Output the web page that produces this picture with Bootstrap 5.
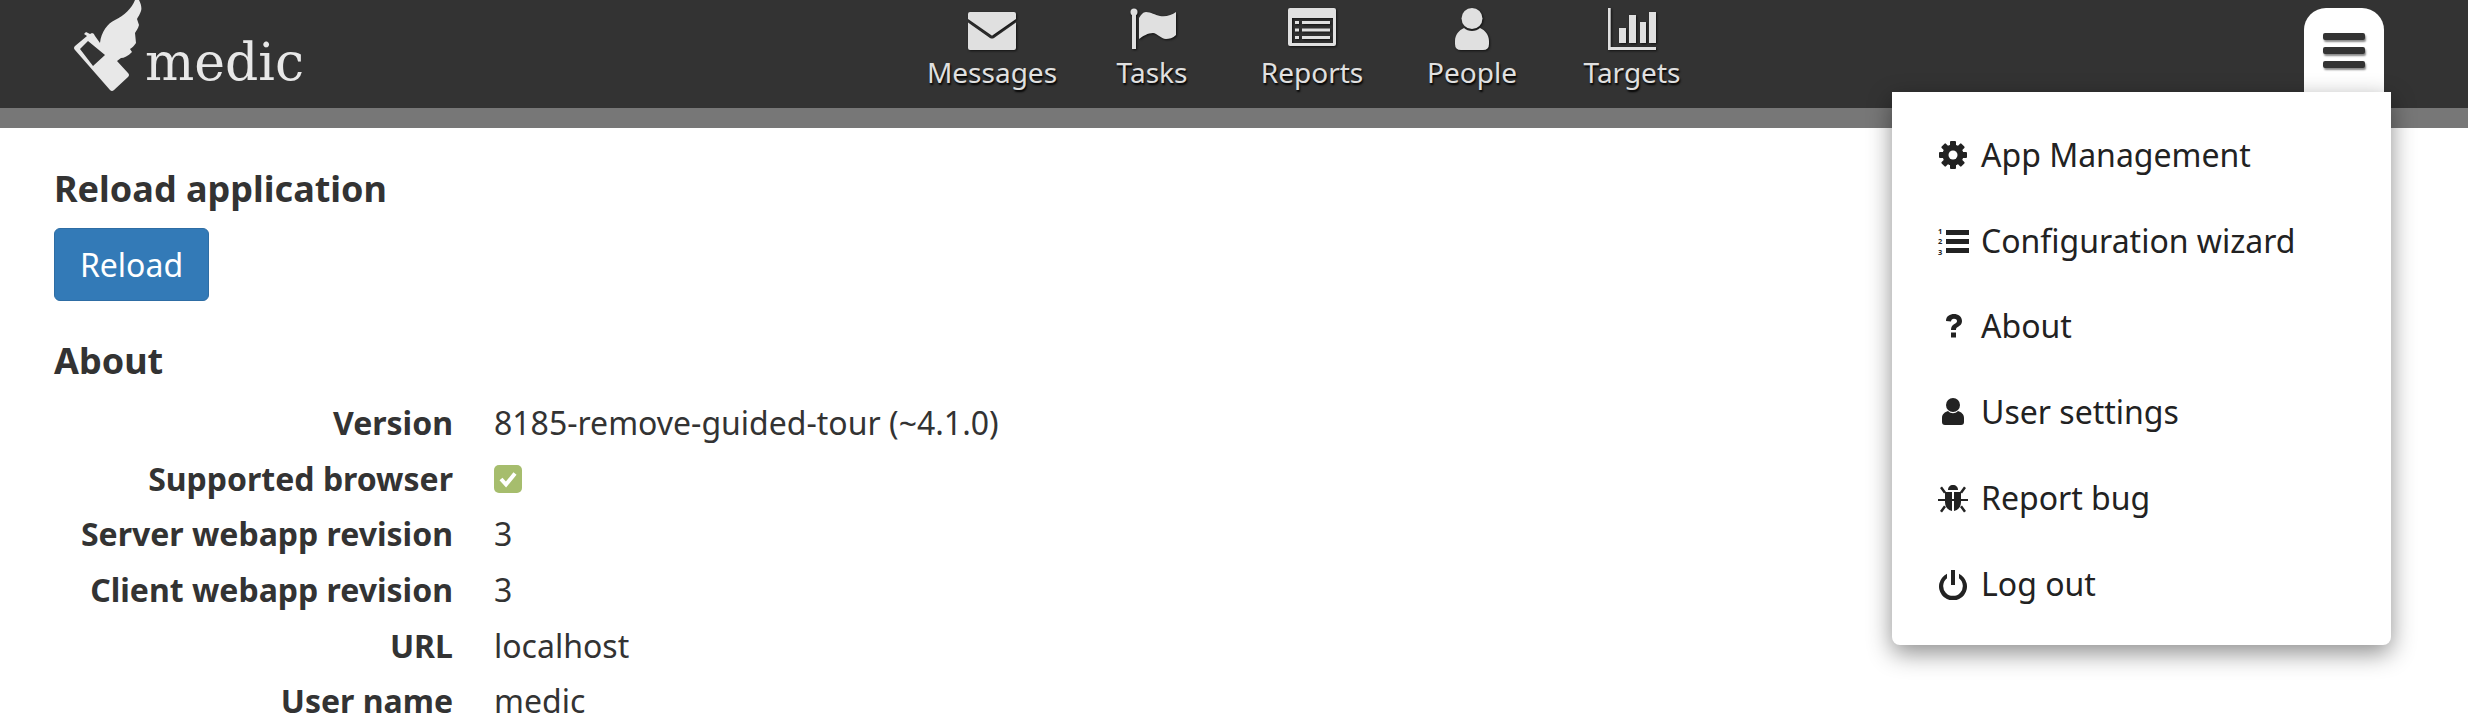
<!DOCTYPE html>
<html lang="en">
<head>
  <meta charset="UTF-8">
  <title>Medic - Configuration</title>
  <link href="https://cdn.jsdelivr.net/npm/bootstrap@5.3.0/dist/css/bootstrap.min.css" rel="stylesheet">
  <style>
    body { font-family: "Noto Sans", sans-serif; font-size: 32px; color: #333; overflow: hidden; height: 726px; }
    .top-bar { height: 108px; background: #333; padding-left: 74px; }
    .brand-link { height: 108px; color: #e8e8e8; text-decoration: none; }
    .brand-link svg { display: block; }
    .brand-link span { font-family: "DejaVu Serif", serif; font-size: 52px; line-height: 1; margin-left: 3px; margin-top: 15px; }
    .nav-tabs-main { position: absolute; left: 912px; top: 0; }
    .tab-item { width: 160px; color: #e0e0e0; font-size: 28px; line-height: 38px; text-shadow: 1px 2px 2px #000; text-decoration: none; }
    .tab-item svg { display: block; height: 42px; width: 60px; margin-top: 8px; margin-bottom: 3px; fill: #e0e0e0; filter: drop-shadow(1px 1px 1px #111); }
    .sub-bar { height: 20px; background: #777; }
    .toggle-tab { position: absolute; left: 2304px; top: 8px; width: 80px; height: 90px; background: #fff; border-radius: 22px 22px 0 0; padding-top: 25px; }
    .toggle-tab i { display: block; width: 42px; height: 7px; margin: 0 auto 7px; background: #333; border-radius: 2px; box-shadow: 1px 2px 2px #888; }
    .side-menu { position: absolute; left: 1892px; top: 92px; width: 499px; padding: 20px 0 18px; background: #fff; border-radius: 0 0 8px 8px; box-shadow: 0 8px 24px rgba(0,0,0,.45); }
    .side-menu a { height: 85.8px; padding-left: 45px; color: #222; font-size: 32px; text-decoration: none; }
    .side-menu svg { display: block; width: 32px; height: 32px; margin-right: 12px; flex: none; fill: #222; }
    .page-body { padding: 37px 54px 0; }
    .page-body h2 { font-size: 36px; font-weight: 700; line-height: 48px; margin: 0 0 15px; color: #333; }
    .page-body h2.about-head { margin: 36px 0 10px; }
    .btn-reload { background: #337ab7; border: 1px solid #2e6da4; border-radius: 6px; color: #fff; font-size: 32px; line-height: 42px; width: 155px; height: 73px; padding: 0; }
    .about-row { height: 55.7px; line-height: 55px; }
    .about-label { width: 399px; text-align: right; font-weight: 700; margin-right: 41px; }
    .ok-box { display: block; width: 28px; height: 28px; background: #a6bd6d; border-radius: 5px; }
    .ok-box svg { display: block; }
  </style>
</head>
<body>
  <div class="position-relative">
    <div class="top-bar d-flex align-items-start">
      <a class="brand-link d-flex align-items-center">
        <svg width="68" height="92" viewBox="74 0 68 92" fill="#e8e8e8" class="align-self-start">
          <path fill-rule="evenodd" d="M100 43 C101 32 108 23 115 20 C124 16 132 8 135 0 H139 C141 4 142 8 141 11 C140 14 138 17 137 19 L139 25 C138 29 136 31 135 33 L136 43 C134 46 132 48 130 49 L132 52 C128 56 124 58 121 58 L117 61 L128 73 Q130 75 128 77 L114 90 Q112 92 110 90 L75 50 Q73 48 75 46 L87 36 L84 34 L86 32 L90 34 L92 33 Q94 33 95 36 Z M88 41 L80 49 L93 66 L105 55 Z"/>
        </svg>
        <span>medic</span>
      </a>
    </div>
    <div class="sub-bar"></div>

    <nav class="nav-tabs-main d-flex">
      <a class="tab-item d-flex flex-column align-items-center">
        <svg viewBox="0 0 60 42"><path d="M8 4 H52 Q54 4 54 6 V11 L31 27 Q30 28 29 27 L6 11 V6 Q6 4 8 4 Z M6 14.500 L28 30 Q30 31 32 30 L54 14.500 V40 Q54 42 52 42 H8 Q6 42 6 40 Z"/></svg>
        <span>Messages</span>
      </a>
      <a class="tab-item d-flex flex-column align-items-center">
        <svg viewBox="0 0 60 42"><circle cx="12" cy="4" r="3.500"/><rect x="10" y="6" width="4" height="35"/><path d="M17 10 C19 7 21 4 24 4 C29 4 33 7 38 8 C44 9 50 7 54 4 V27 C51 30 47 31 44 31 C39 31 35 25 31 25 C26 25 21 28 17 31 Z"/></svg>
        <span>Tasks</span>
      </a>
      <a class="tab-item d-flex flex-column align-items-center">
        <svg viewBox="0 0 60 42" fill-rule="evenodd"><path d="M8 0 H52 Q54 0 54 2 V36 Q54 38 52 38 H8 Q6 38 6 36 V2 Q6 0 8 0 Z M10 10 V35 H51 V10 Z M13 13 H17 V16 H13 Z M20 13 H48 V16 H20 Z M13 20.500 H17 V23.500 H13 Z M20 20.500 H48 V23.500 H20 Z M13 28 H17 V31 H13 Z M20 28 H48 V31 H20 Z"/></svg>
        <span>Reports</span>
      </a>
      <a class="tab-item d-flex flex-column align-items-center">
        <svg viewBox="0 0 60 42"><circle cx="30" cy="10.500" r="10.500"/><path d="M13 36 V33 C13 27 17 22 22 20 C26 24 34 24 38 20 C43 22 47 27 47 33 V36 Q47 42 41 42 H19 Q13 42 13 36 Z"/></svg>
        <span>People</span>
      </a>
      <a class="tab-item d-flex flex-column align-items-center">
        <svg viewBox="0 0 60 42"><path d="M6 0 H8.700 V39 H54 V42 H6 Z"/><rect x="17" y="20" width="7" height="15"/><rect x="27" y="7" width="7" height="28"/><rect x="38" y="14" width="6" height="21"/><rect x="47" y="4" width="7" height="31"/></svg>
        <span>Targets</span>
      </a>
    </nav>

    <div class="toggle-tab"><i></i><i></i><i></i></div>

    <div class="side-menu">
      <a class="d-flex align-items-center">
        <svg viewBox="0 0 32 32">
          <g>
            <rect x="13" y="2" width="6" height="28" rx="1"/>
            <rect x="13" y="2" width="6" height="28" rx="1" transform="rotate(45 16 16)"/>
            <rect x="13" y="2" width="6" height="28" rx="1" transform="rotate(90 16 16)"/>
            <rect x="13" y="2" width="6" height="28" rx="1" transform="rotate(135 16 16)"/>
          </g>
          <circle cx="16" cy="16" r="10.500"/>
          <circle cx="16" cy="16" r="4.500" fill="#fff"/>
        </svg>
        <span>App Management</span>
      </a>
      <a class="d-flex align-items-center">
        <svg viewBox="0 0 32 32"><rect x="9" y="5" width="23" height="5"/><rect x="9" y="14" width="23" height="5"/><rect x="9" y="23" width="23" height="5"/><text x="1" y="8.500" font-size="7.500" font-weight="700" font-family="Noto Sans">1</text><text x="1" y="19" font-size="7.500" font-weight="700" font-family="Noto Sans">2</text><text x="1" y="29.500" font-size="7.500" font-weight="700" font-family="Noto Sans">3</text></svg>
        <span>Configuration wizard</span>
      </a>
      <a class="d-flex align-items-center">
        <svg viewBox="0 0 32 32"><path d="M9 11 C9 6 13 4 17 4 C21 4 25 6.500 25 11 C25 15 22 16 20 17.500 C19 18.200 19 19 19 20 H14 C14 17 15 15.500 17 14.300 C19 13 20 12.500 20 11 C20 9.500 18.500 8.700 17 8.700 C15.300 8.700 14 9.800 14 11.500 Z M14 22.500 H19 V27.500 H14 Z"/></svg>
        <span>About</span>
      </a>
      <a class="d-flex align-items-center">
        <svg viewBox="0 0 32 32"><circle cx="16" cy="9" r="7"/><path d="M5 26 V22 C5 18 8 16 11 15 C14 18 18 18 21 15 C24 16 27 18 27 22 V26 Q27 29 24 29 H8 Q5 29 5 26 Z"/></svg>
        <span>User settings</span>
      </a>
      <a class="d-flex align-items-center">
        <svg viewBox="0 0 32 32"><path d="M11 8 C11 5 13 3 16 3 C19 3 21 5 21 8 Z"/><path d="M8 10 H15 V29 C11 28 8 25 8 20 Z M17 10 H24 V20 C24 25 21 28 17 29 Z"/><path d="M1 17 H31 V19 H1 Z M3 6 L5 4.500 L9 10 L7 11.500 Z M29 6 L27 4.500 L23 10 L25 11.500 Z M3 29 L5 30.500 L9 25 L7 23.500 Z M29 29 L27 30.500 L23 25 L25 23.500 Z"/></svg>
        <span>Report bug</span>
      </a>
      <a class="d-flex align-items-center">
        <svg viewBox="0 0 32 32"><path d="M14 2 H18 V17 H14 Z"/><path d="M10 5.800 V10.300 A9.800 9.800 0 1 0 22 10.300 V5.800 A14 14 0 1 1 10 5.800 Z"/></svg>
        <span>Log out</span>
      </a>
    </div>

    <main class="page-body">
      <h2>Reload application</h2>
      <button class="btn btn-reload d-block">Reload</button>
      <h2 class="about-head">About</h2>
      <div class="d-flex about-row"><div class="about-label">Version</div><div>8185-remove-guided-tour (~4.1.0)</div></div>
      <div class="d-flex about-row"><div class="about-label">Supported browser</div><div class="d-flex align-items-center"><span class="ok-box"><svg viewBox="0 0 28 28" width="28" height="28"><path d="M7 14 L12 19.500 L21 8.500" fill="none" stroke="#fff" stroke-width="4"/></svg></span></div></div>
      <div class="d-flex about-row"><div class="about-label">Server webapp revision</div><div>3</div></div>
      <div class="d-flex about-row"><div class="about-label">Client webapp revision</div><div>3</div></div>
      <div class="d-flex about-row"><div class="about-label">URL</div><div>localhost</div></div>
      <div class="d-flex about-row"><div class="about-label">User name</div><div>medic</div></div>
    </main>
  </div>
</body>
</html>
